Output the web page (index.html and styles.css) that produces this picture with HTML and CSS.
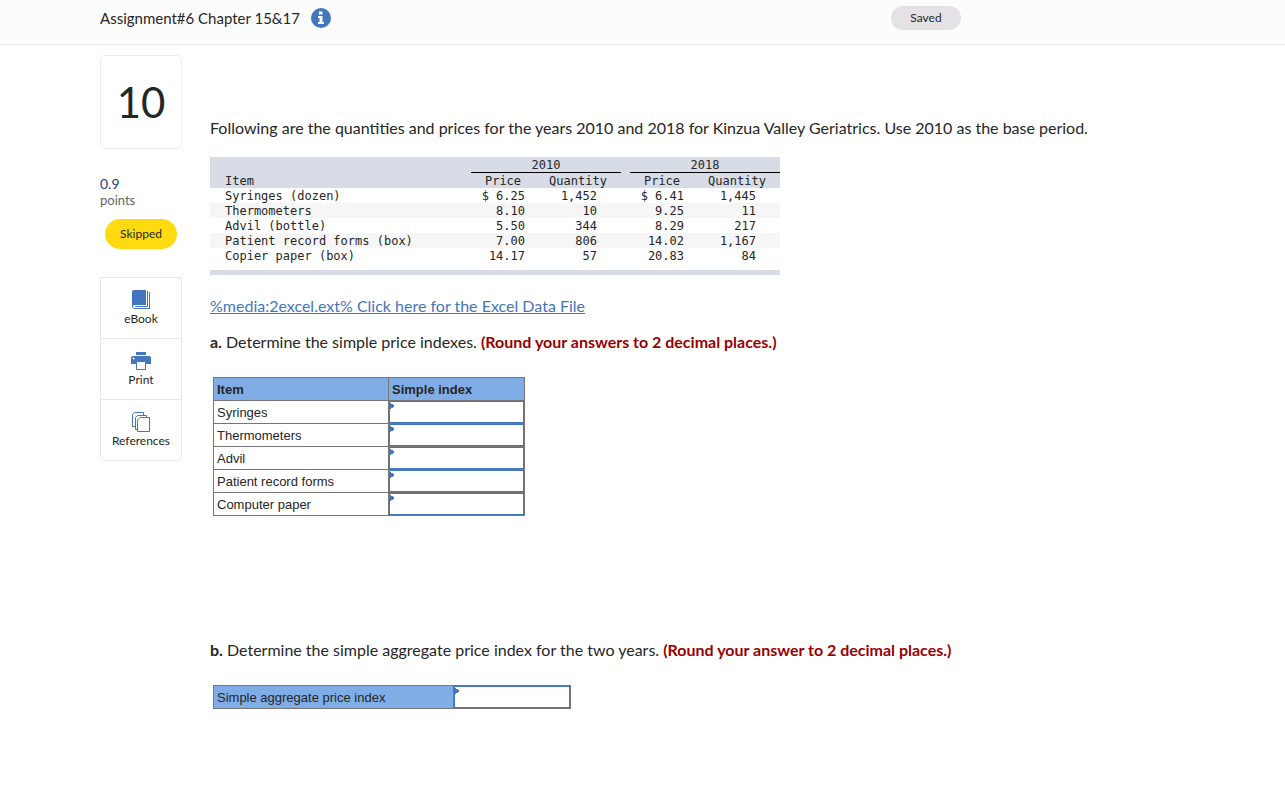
FILE: index.html
```html
<!DOCTYPE html>
<html lang="en">
<head>
  <meta charset="UTF-8">
  <meta name="viewport" content="width=device-width, initial-scale=1.0">
  <title>Assignment#6 Chapter 15&amp;17</title>
  <link rel="stylesheet" href="styles.css">
</head>
<body>
  <!-- Header -->
  <header class="header">
    <h1 class="header-title">Assignment#6 Chapter 15&amp;17</h1>
    <button class="info-button" type="button" aria-label="Assignment information">
      <svg width="20" height="20" viewBox="0 0 20 20">
        <circle cx="10" cy="10" r="10" fill="#4376bd"/>
        <path d="M8 3.500h3.500v3H8zM7 8h4.500v6H13v2H7v-2h1.500v-4H7z" fill="#fff"/>
      </svg>
    </button>
    <span class="saved">Saved</span>
  </header>

  <div class="page">
    <!-- Question sidebar -->
    <aside class="sidebar">
      <div class="question-number">10</div>
      <div class="points">
        <div class="points-value">0.9</div>
        <div class="points-label">points</div>
      </div>
      <span class="skipped">Skipped</span>
      <nav class="tools">
        <button class="tool" type="button">
          <svg width="20" height="20" viewBox="0 0 20 20">
            <path d="M3 0h12v15H3.500C2.500 15 2 15.700 2 16.500S2.500 18 3.500 18H18V2h1v17H4c-2 0-3-1-3-3V2c0-1.200.800-2 2-2z" fill="#4376bd"/>
            <path d="M16.500 1v15.500H4" fill="none" stroke="#4376bd"/>
          </svg>
          eBook
        </button>
        <button class="tool" type="button">
          <svg width="20" height="20" viewBox="0 0 20 20">
            <path d="M5 1h10v3H5zM2 5h16c1.200 0 2 .8 2 2v6h-5v-3H5v3H0V7c0-1.200.8-2 2-2z" fill="#4376bd"/>
            <path d="M5.500 10.500h9v8h-9z" fill="#fff" stroke="#4376bd"/>
            <circle cx="2.500" cy="7.500" r="1" fill="#fff"/>
          </svg>
          Print
        </button>
        <button class="tool" type="button">
          <svg width="20" height="20" viewBox="0 0 20 20" fill="#fff" stroke="#4376bd">
            <path d="M3.500.5h9v14h-11v-12z"/>
            <path d="M6.500 3.500h9v14h-11v-12z"/>
            <path d="M9 5.500h9.500v14h-12V8z"/>
          </svg>
          References
        </button>
      </nav>
    </aside>

    <!-- Question body -->
    <main class="content">
      <p class="intro">Following are the quantities and prices for the years 2010 and 2018 for Kinzua Valley Geriatrics. Use 2010 as the base period.</p>

      <table class="data-table">
        <colgroup>
          <col class="col-item">
          <col class="col-price">
          <col class="col-quantity">
          <col class="col-gap">
          <col class="col-price">
          <col class="col-quantity">
        </colgroup>
        <thead>
          <tr>
            <th></th>
            <th class="year" colspan="2">2010</th>
            <th></th>
            <th class="year" colspan="2">2018</th>
          </tr>
          <tr>
            <th class="item">Item</th>
            <th>Price</th>
            <th>Quantity</th>
            <th></th>
            <th>Price</th>
            <th>Quantity</th>
          </tr>
        </thead>
        <tbody>
          <tr><td class="item">Syringes (dozen)</td><td class="price">$ 6.25</td><td class="quantity">1,452</td><td></td><td class="price">$ 6.41</td><td class="quantity">1,445</td></tr>
          <tr><td class="item">Thermometers</td><td class="price">8.10</td><td class="quantity">10</td><td></td><td class="price">9.25</td><td class="quantity">11</td></tr>
          <tr><td class="item">Advil (bottle)</td><td class="price">5.50</td><td class="quantity">344</td><td></td><td class="price">8.29</td><td class="quantity">217</td></tr>
          <tr><td class="item">Patient record forms (box)</td><td class="price">7.00</td><td class="quantity">806</td><td></td><td class="price">14.02</td><td class="quantity">1,167</td></tr>
          <tr><td class="item">Copier paper (box)</td><td class="price">14.17</td><td class="quantity">57</td><td></td><td class="price">20.83</td><td class="quantity">84</td></tr>
        </tbody>
      </table>

      <p class="file-link"><a href="#">%media:2excel.ext% Click here for the Excel Data File</a></p>

      <section class="part">
        <p><strong>a.</strong> Determine the simple price indexes. <strong class="rounding">(Round your answers to 2 decimal places.)</strong></p>
        <table class="answer-table">
          <thead>
            <tr><th class="label-cell">Item</th><th>Simple index</th></tr>
          </thead>
          <tbody>
            <tr><td><label for="syringes">Syringes</label></td><td class="answer"><input id="syringes" type="text"></td></tr>
            <tr><td><label for="thermometers">Thermometers</label></td><td class="answer"><input id="thermometers" type="text"></td></tr>
            <tr><td><label for="advil">Advil</label></td><td class="answer"><input id="advil" type="text"></td></tr>
            <tr><td><label for="forms">Patient record forms</label></td><td class="answer"><input id="forms" type="text"></td></tr>
            <tr><td><label for="paper">Computer paper</label></td><td class="answer"><input id="paper" type="text"></td></tr>
          </tbody>
        </table>
      </section>

      <section class="part">
        <p><strong>b.</strong> Determine the simple aggregate price index for the two years. <strong class="rounding">(Round your answer to 2 decimal places.)</strong></p>
        <table class="answer-table aggregate">
          <tbody>
            <tr><th class="label-cell"><label for="aggregate">Simple aggregate price index</label></th><td class="answer"><input id="aggregate" type="text"></td></tr>
          </tbody>
        </table>
      </section>
    </main>
  </div>
</body>
</html>
```
FILE: styles.css
```css
* {
  box-sizing: border-box;
  margin: 0;
  padding: 0;
}

body {
  font-family: Lato, sans-serif;
  font-size: 16px;
  line-height: 24px;
  color: #262626;
  background-color: #fff;
}

button {
  font-family: inherit;
  color: inherit;
  background: none;
  border: none;
  cursor: pointer;
}

svg {
  display: block;
}

/* Header */
.header {
  display: flex;
  align-items: center;
  padding: 6px 324px 14px 100px;
  background-color: #fcfcfc;
  border-bottom: 1px solid #ededed;
}

.header-title {
  font-size: 15px;
  font-weight: 400;
}

.info-button {
  margin-left: 11px;
}

.saved {
  margin-left: auto;
  width: 70px;
  border-radius: 12px;
  background-color: #e4e2e5;
  font-size: 12px;
  text-align: center;
}

/* Layout */
.page {
  display: flex;
  gap: 28px;
  padding: 10px 100px 40px;
}

.sidebar {
  flex: none;
  width: 82px;
}

.content {
  flex: 1;
  padding-top: 61px;
}

/* Sidebar */
.question-number {
  padding: 22px 0;
  border: 1px solid #ededed;
  border-radius: 5px;
  font-size: 42px;
  line-height: 48px;
  text-align: center;
}

.points {
  padding: 27px 0 11px;
  line-height: 16px;
}

.points-value {
  font-size: 14px;
  color: #27427c;
}

.points-label {
  font-size: 13px;
  color: #666;
}

.skipped {
  display: block;
  margin: 0 5px 28px;
  border-radius: 15px;
  background-color: #fddb10;
  font-size: 12px;
  line-height: 30px;
  text-align: center;
}

.tools {
  border: 1px solid #e8e8e8;
  border-radius: 0 0 5px 5px;
}

.tool {
  display: flex;
  flex-direction: column;
  align-items: center;
  gap: 1px;
  width: 100%;
  padding: 12px 0 11px;
  font-size: 12px;
  line-height: 16px;
}

.tool + .tool {
  border-top: 1px solid #e8e8e8;
}

/* Price and quantity data */
.data-table {
  table-layout: fixed;
  width: 570px;
  margin-top: 17px;
  border-collapse: separate;
  border-spacing: 0;
  border-bottom: 5px solid #d8dce6;
  padding-bottom: 7px;
  font-family: "DejaVu Sans Mono", monospace;
  font-size: 12px;
  line-height: 13px;
}

.col-item { width: 261px; }
.col-price { width: 64px; }
.col-quantity { width: 86px; }
.col-gap { width: 9px; }

.data-table th,
.data-table td {
  padding-top: 2px;
}

.data-table th {
  background-color: #d8dce6;
  font-weight: 400;
}

.data-table .year {
  border-bottom: 1px solid #000;
}

.data-table .item {
  padding-left: 15px;
  text-align: left;
}

.data-table .price {
  padding-right: 10px;
  text-align: right;
}

.data-table .quantity {
  padding-right: 24px;
  text-align: right;
}

.data-table tbody tr:nth-child(even) {
  background-color: #f6f6f6;
}

.file-link {
  margin: 19px 0 12px;
}

.file-link a {
  color: #4376bd;
}

/* Question parts */
.part + .part {
  margin-top: 122px;
}

.rounding {
  color: #990000;
}

.answer-table {
  margin: 23px 0 0 3px;
  border-collapse: collapse;
  table-layout: fixed;
  width: 312px;
  font-family: "Liberation Sans", Arial, sans-serif;
  font-size: 13px;
  line-height: 20px;
}

.answer-table th,
.answer-table td {
  height: 23px;
  padding: 2px 3px 0;
  border: 1px solid #767676;
  text-align: left;
}

.answer-table th {
  background-color: #80ade6;
}

.answer-table .label-cell {
  width: 175px;
}

.answer-table .answer {
  padding: 0;
  background-color: #fff;
}

/* blue marker in the corner of each answer box */
.answer input {
  display: block;
  width: 100%;
  height: 22px;
  padding: 0 8px;
  border: 1px solid #4376bd;
  background: conic-gradient(from 239deg at 5px 3px, #4376bd 62deg, transparent 0) 0 1px / 5px 6px no-repeat;
  font: inherit;
}

.aggregate {
  width: 358px;
}

.aggregate th {
  font-weight: 400;
}

.aggregate .label-cell {
  width: 240px;
}
```
